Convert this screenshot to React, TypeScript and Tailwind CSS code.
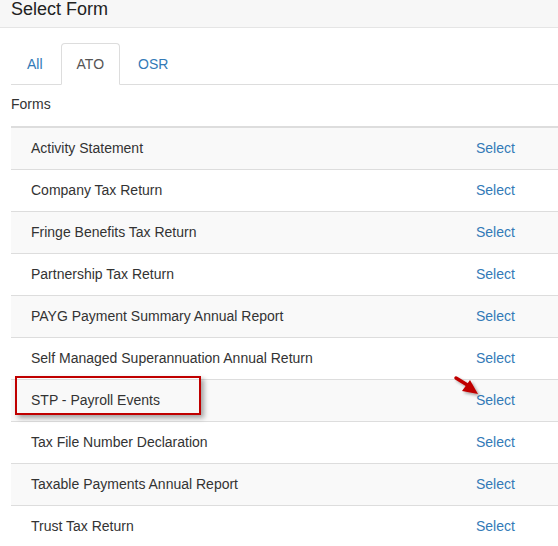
import React from 'react';

const forms = [
  'Activity Statement',
  'Company Tax Return',
  'Fringe Benefits Tax Return',
  'Partnership Tax Return',
  'PAYG Payment Summary Annual Report',
  'Self Managed Superannuation Annual Return',
  'STP - Payroll Events',
  'Tax File Number Declaration',
  'Taxable Payments Annual Report',
  'Trust Tax Return',
];

const tabs = ['All', 'ATO', 'OSR'];

export default function App() {
  return (
    <div className="relative w-[558px] h-[546px] overflow-hidden bg-white text-[14px] text-[#333] font-['Liberation_Sans',Arial,sans-serif]">
      {/* Modal header */}
      <div className="h-[28px] bg-[#f7f7f7] border-b border-[#e5e5e5] pl-[11px]">
        <h4 className="text-[18px] leading-[18px] text-[#222]">Select Form</h4>
      </div>

      <div className="pl-[11px]">
        {/* Tabs */}
        <ul className="mt-[15px] flex border-b border-[#ddd]">
          {tabs.map((t) => {
            const active = t === 'ATO';
            return (
              <li key={t} className="-mb-px mr-[2px]">
                <a
                  className={
                    active
                      ? 'block px-[15px] py-[10px] leading-[20px] border border-[#ddd] border-b-transparent rounded-t-[4px] bg-white text-[#555]'
                      : 'block px-[15px] py-[10px] leading-[20px] border border-transparent text-[#337ab7]'
                  }
                >
                  {t}
                </a>
              </li>
            );
          })}
        </ul>

        <div className="mt-[9px] mb-[12px] leading-[20px]">Forms</div>

        {/* Forms table */}
        <div className="border-t-2 border-[#ddd]">
          {forms.map((f, i) => (
            <div
              key={f}
              className={`flex items-center pb-[2px] ${i > 0 ? 'h-[42px] border-t border-[#ddd]' : 'h-[41px]'} ${i % 2 === 0 ? 'bg-[#f9f9f9]' : 'bg-white'}`}
            >
              <div className="w-[445px] pl-5 leading-[20px]">{f}</div>
              <div className="pl-5 leading-[20px] text-[#337ab7]">Select</div>
            </div>
          ))}
        </div>
      </div>

      {/* Annotation: highlight box */}
      <div className="absolute left-[15px] top-[376px] w-[186px] h-[39px] border-2 border-[#c00000] shadow-[3px_3px_5px_rgba(0,0,0,0.35)]" />

      {/* Annotation: arrow */}
      <svg className="absolute left-[450px] top-[372px]" width="36" height="30" viewBox="0 0 36 30">
        <defs>
          <filter id="sh" x="-30%" y="-30%" width="160%" height="160%">
            <feDropShadow dx="2" dy="2" stdDeviation="1.5" floodColor="#000" floodOpacity="0.35" />
          </filter>
        </defs>
        <g filter="url(#sh)">
          <line x1="6" y1="6" x2="19" y2="14" stroke="#c00000" strokeWidth="3.5" strokeLinecap="round" />
          <polygon points="28,22 12,19 20,8" fill="#c00000" />
        </g>
      </svg>
    </div>
  );
}
